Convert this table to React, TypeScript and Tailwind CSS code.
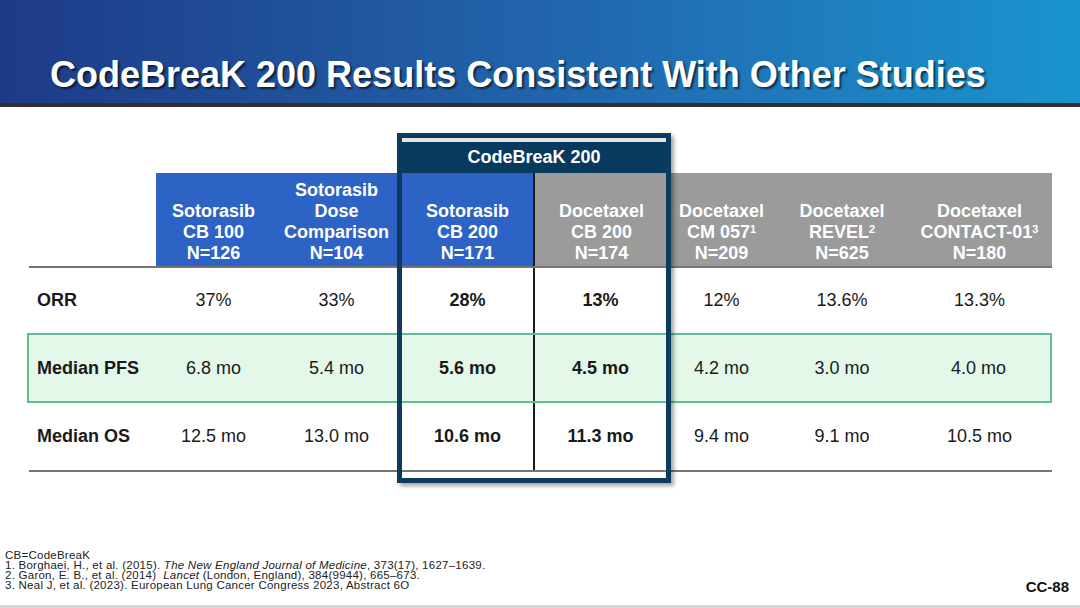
import type { ReactNode } from 'react';

const COLS = 'grid grid-cols-[127px_115px_131px_131px_133px_111px_130px_145px]';
const COLS_HL = 'grid grid-cols-[127px_115px_131px_131px_133px_111px_130px_1fr]';

type Head = { lines: ReactNode[]; tone: 'blue' | 'gray' };

const HEADS: Head[] = [
  { lines: ['Sotorasib', 'CB 100', 'N=126'], tone: 'blue' },
  { lines: ['Sotorasib', 'Dose', 'Comparison', 'N=104'], tone: 'blue' },
  { lines: ['Sotorasib', 'CB 200', 'N=171'], tone: 'blue' },
  { lines: ['Docetaxel', 'CB 200', 'N=174'], tone: 'gray' },
  { lines: ['Docetaxel', <>CM 057<sup className="text-[11px]">1</sup></>, 'N=209'], tone: 'gray' },
  { lines: ['Docetaxel', <>REVEL<sup className="text-[11px]">2</sup></>, 'N=625'], tone: 'gray' },
  { lines: ['Docetaxel', <>CONTACT-01<sup className="text-[11px]">3</sup></>, 'N=180'], tone: 'gray' },
];

const ROWS = [
  { label: 'ORR', vals: ['37%', '33%', '28%', '13%', '12%', '13.6%', '13.3%'], h: 'h-[65px]' },
  { label: 'Median PFS', vals: ['6.8 mo', '5.4 mo', '5.6 mo', '4.5 mo', '4.2 mo', '3.0 mo', '4.0 mo'], hl: true, h: 'h-[70px]' },
  { label: 'Median OS', vals: ['12.5 mo', '13.0 mo', '10.6 mo', '11.3 mo', '9.4 mo', '9.1 mo', '10.5 mo'], h: 'h-[67px]' },
];

const ValueCells = ({ vals }: { vals: string[] }) => (
  <>
    {vals.map((v, i) => (
      <div
        key={i}
        className={`flex items-center justify-center h-full ${i >= 2 && i <= 3 ? 'font-bold' : ''} ${i === 3 ? 'border-l-2 border-[#1c1c1c]' : ''}`}
      >
        {v}
      </div>
    ))}
  </>
);

const App = () => {
  return (
    <div className="w-[1080px] h-[608px] flex flex-col bg-white overflow-hidden font-['Liberation_Sans',Arial,sans-serif] text-[#1a1a1a]">
      {/* Title bar */}
      <div className="h-[103px] bg-linear-to-r from-[#1e3a87] via-[#2164ab] to-[#1994ce] pl-[50px] pt-[55px]">
        <h1 className="text-[36px] leading-[40px] font-bold text-white [text-shadow:2px_2px_2px_rgba(0,0,0,0.6)]">
          CodeBreaK 200 Results Consistent With Other Studies
        </h1>
      </div>
      <div className="h-[4px] bg-[#2f2f2f]" />

      {/* Comparison table */}
      <div className="relative ml-[29px] mt-[26px] w-[1023px] text-[18px]">
        <div className={`${COLS} h-[40px]`}>
          <div className="col-start-4 col-span-2 mt-[5px] border-t-4 border-[#e4e4e4] bg-[#083a5d] flex items-center justify-center text-white font-bold">
            CodeBreaK 200
          </div>
        </div>

        <div className={`${COLS} h-[93px]`}>
          <div />
          {HEADS.map((h, i) => (
            <div
              key={i}
              className={`flex flex-col items-center justify-end pb-[2px] text-center text-white font-bold leading-[21px] ${h.tone === 'blue' ? 'bg-[#2e63c6]' : 'bg-[#9b9b9b]'} ${i === 3 ? 'border-l-2 border-[#1c1c1c] pl-[2px]' : ''}`}
            >
              {h.lines.map((l, j) => (
                <span key={j}>{l}</span>
              ))}
            </div>
          ))}
        </div>
        <div className="h-[2px] bg-[#767676]" />

        {ROWS.map((r) =>
          r.hl ? (
            <div key={r.label} className={`${COLS_HL} ${r.h} -ml-[2px] w-[1025px] border-2 border-[#5fbf91] bg-[#e3f8e9] items-center`}>
              <div className="pl-[8px] font-bold">{r.label}</div>
              <ValueCells vals={r.vals} />
            </div>
          ) : (
            <div key={r.label} className={`${COLS} ${r.h} items-center`}>
              <div className="pl-[8px] font-bold">{r.label}</div>
              <ValueCells vals={r.vals} />
            </div>
          )
        )}
        <div className="h-[2px] bg-[#767676]" />

        {/* CodeBreaK 200 frame */}
        <div className="absolute left-[368px] top-0 w-[274px] h-[350px] border-[5px] border-[#0b3b5d] shadow-[3px_3px_4px_rgba(0,0,0,0.35)] pointer-events-none z-10" />
      </div>

      <div className="flex-1" />

      {/* Footnotes */}
      <div className="h-[56px] flex justify-between">
        <div className="pl-[5px] pt-[1px] text-[11.5px] leading-[10px] tracking-[0.25px] text-[#222]">
          <div>CB=CodeBreaK</div>
          <div>
            1. Borghaei, H., et al. (2015). <i>The New England Journal of Medicine</i>, 373(17), 1627–1639.
          </div>
          <div>
            2. Garon, E. B., et al. (2014)&nbsp; <i>Lancet</i> (London, England), 384(9944), 665–673.
          </div>
          <div>3. Neal J, et al. (2023). European Lung Cancer Congress 2023, Abstract 6O</div>
        </div>
        <div className="self-end mb-[10px] pr-[11px] text-[15px] leading-[17px] font-bold text-[#111]">CC-88</div>
      </div>
      <div className="h-[3px] bg-[#d6d6ce]" />
    </div>
  );
};

export default App;
